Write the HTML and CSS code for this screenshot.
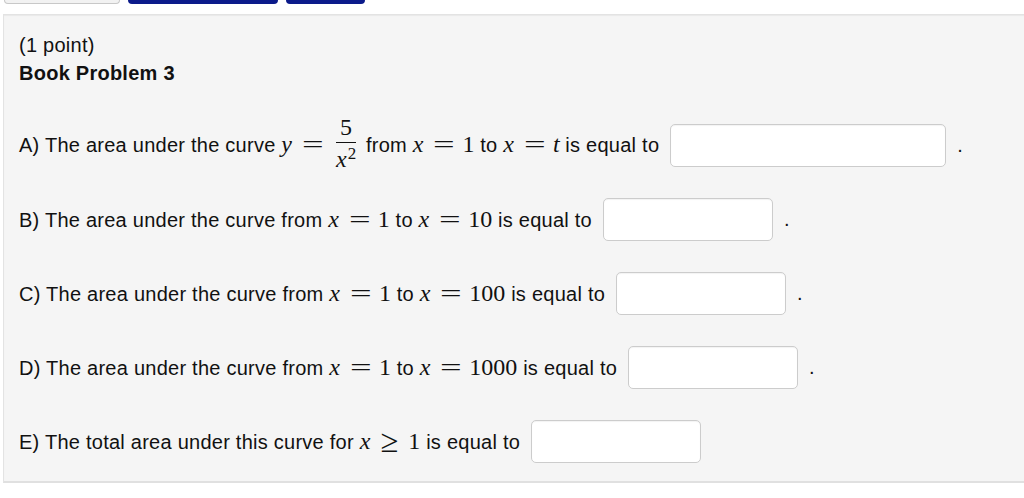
FILE: index.html
```html
<!DOCTYPE html>
<html lang="en">
<head>
    <meta charset="UTF-8">
    <meta name="viewport" content="width=device-width, initial-scale=1.0">
    <title>Book Problem 3</title>
    <link rel="stylesheet" href="styles.css">
</head>
<body>
    <div class="toolbar">
        <div class="tab tab-light"></div>
        <div class="tab tab-dark tab-wide"></div>
        <div class="tab tab-dark tab-short"></div>
    </div>

    <div class="well">
        <div class="points">(1 point)</div>
        <div class="title">Book Problem 3</div>

        <div class="part part-a">
            <span class="label">A) The area under the curve <span class="m"><i>y</i><span class="op"><span>=</span></span><span class="frac"><span class="num">5</span><span class="den"><i>x</i><sup>2</sup></span></span></span> from <span class="m"><i>x</i><span class="op"><span>=</span></span>1</span> to <span class="m"><i>x</i><span class="op"><span>=</span></span><i>t</i></span> is equal to</span>
            <input class="answer answer-wide" type="text">
            <span class="dot">.</span>
        </div>

        <div class="part">
            <span class="label">B) The area under the curve from <span class="m"><i>x</i><span class="op"><span>=</span></span>1</span> to <span class="m"><i>x</i><span class="op"><span>=</span></span>10</span> is equal to</span>
            <input class="answer" type="text">
            <span class="dot">.</span>
        </div>

        <div class="part">
            <span class="label">C) The area under the curve from <span class="m"><i>x</i><span class="op"><span>=</span></span>1</span> to <span class="m"><i>x</i><span class="op"><span>=</span></span>100</span> is equal to</span>
            <input class="answer" type="text">
            <span class="dot">.</span>
        </div>

        <div class="part">
            <span class="label">D) The area under the curve from <span class="m"><i>x</i><span class="op"><span>=</span></span>1</span> to <span class="m"><i>x</i><span class="op"><span>=</span></span>1000</span> is equal to</span>
            <input class="answer" type="text">
            <span class="dot">.</span>
        </div>

        <div class="part">
            <span class="label">E) The total area under this curve for <span class="m"><i>x</i><span class="op op-ge"><span>&ge;</span></span>1</span> is equal to</span>
            <input class="answer" type="text">
        </div>
    </div>
</body>
</html>
```

FILE: styles.css
```css
body {
    font-family: 'Liberation Sans', Arial, sans-serif;
    font-size: 20px;
    letter-spacing: 0.25px;
    color: #111;
    background-color: #fff;
    margin: 0;
    overflow: hidden;
}

.toolbar {
    display: flex;
    gap: 8px;
    padding-left: 4px;
    height: 4px;
}

.tab {
    height: 3px;
    border-radius: 0 0 5px 5px;
}

.tab-light {
    width: 114px;
    background-color: #f2f2f2;
    border: 1px solid #c8c8c8;
    border-top: none;
}

.tab-dark {
    background-color: #0b1a8a;
    height: 4px;
}

.tab-wide {
    width: 150px;
}

.tab-short {
    width: 79px;
}

.well {
    margin: 10px -20px 0 3px;
    height: 436px;
    padding: 16px 15px 14px;
    background-color: #f5f5f5;
    border: 1px solid #e3e3e3;
    border-bottom: 2px solid #e0e0e0;
    box-shadow: inset 0 1px 1px rgba(0, 0, 0, 0.05);
}

.points {
    line-height: 28px;
}

.title {
    line-height: 28px;
    font-weight: bold;
}

.part {
    display: flex;
    align-items: center;
    height: 43px;
    margin-top: 31px;
}

.part-a {
    margin-top: 37px;
    margin-bottom: 8px;
}

.part-a .label {
    margin-bottom: 6px;
}

.label {
    white-space: nowrap;
}

.m {
    font-family: 'Liberation Serif', 'DejaVu Serif', serif;
    font-size: 24px;
    letter-spacing: 0;
}

.m i {
    font-style: italic;
}

.op {
    display: inline-block;
    width: 21px;
    margin: 0 8px 0 10px;
    text-align: center;
}

.op span {
    display: inline-block;
    transform: scaleX(1.6);
}

.op-ge {
    width: 18px;
    margin: 0 10px 0 10px;
}

.op-ge span {
    transform: scale(1.35);
}

.frac {
    display: inline-flex;
    flex-direction: column;
    align-items: center;
    line-height: 1;
    vertical-align: 17px;
    margin: 0 0 0 1px;
}

.num {
    padding: 0 4px 3px;
    border-bottom: 1.5px solid #111;
}

.den {
    padding: 2px 4px 0;
}

.den sup {
    font-size: 17px;
    vertical-align: 8px;
    line-height: 1;
    margin-left: 1px;
}

.answer {
    box-sizing: border-box;
    width: 170px;
    height: 43px;
    margin-left: 11px;
    background-color: #fff;
    border: 1px solid #cccccc;
    border-radius: 5px;
    box-shadow: inset 0 1px 1px rgba(0, 0, 0, 0.05);
}

.answer-wide {
    width: 276px;
}

.dot {
    margin-left: 11px;
}
```
